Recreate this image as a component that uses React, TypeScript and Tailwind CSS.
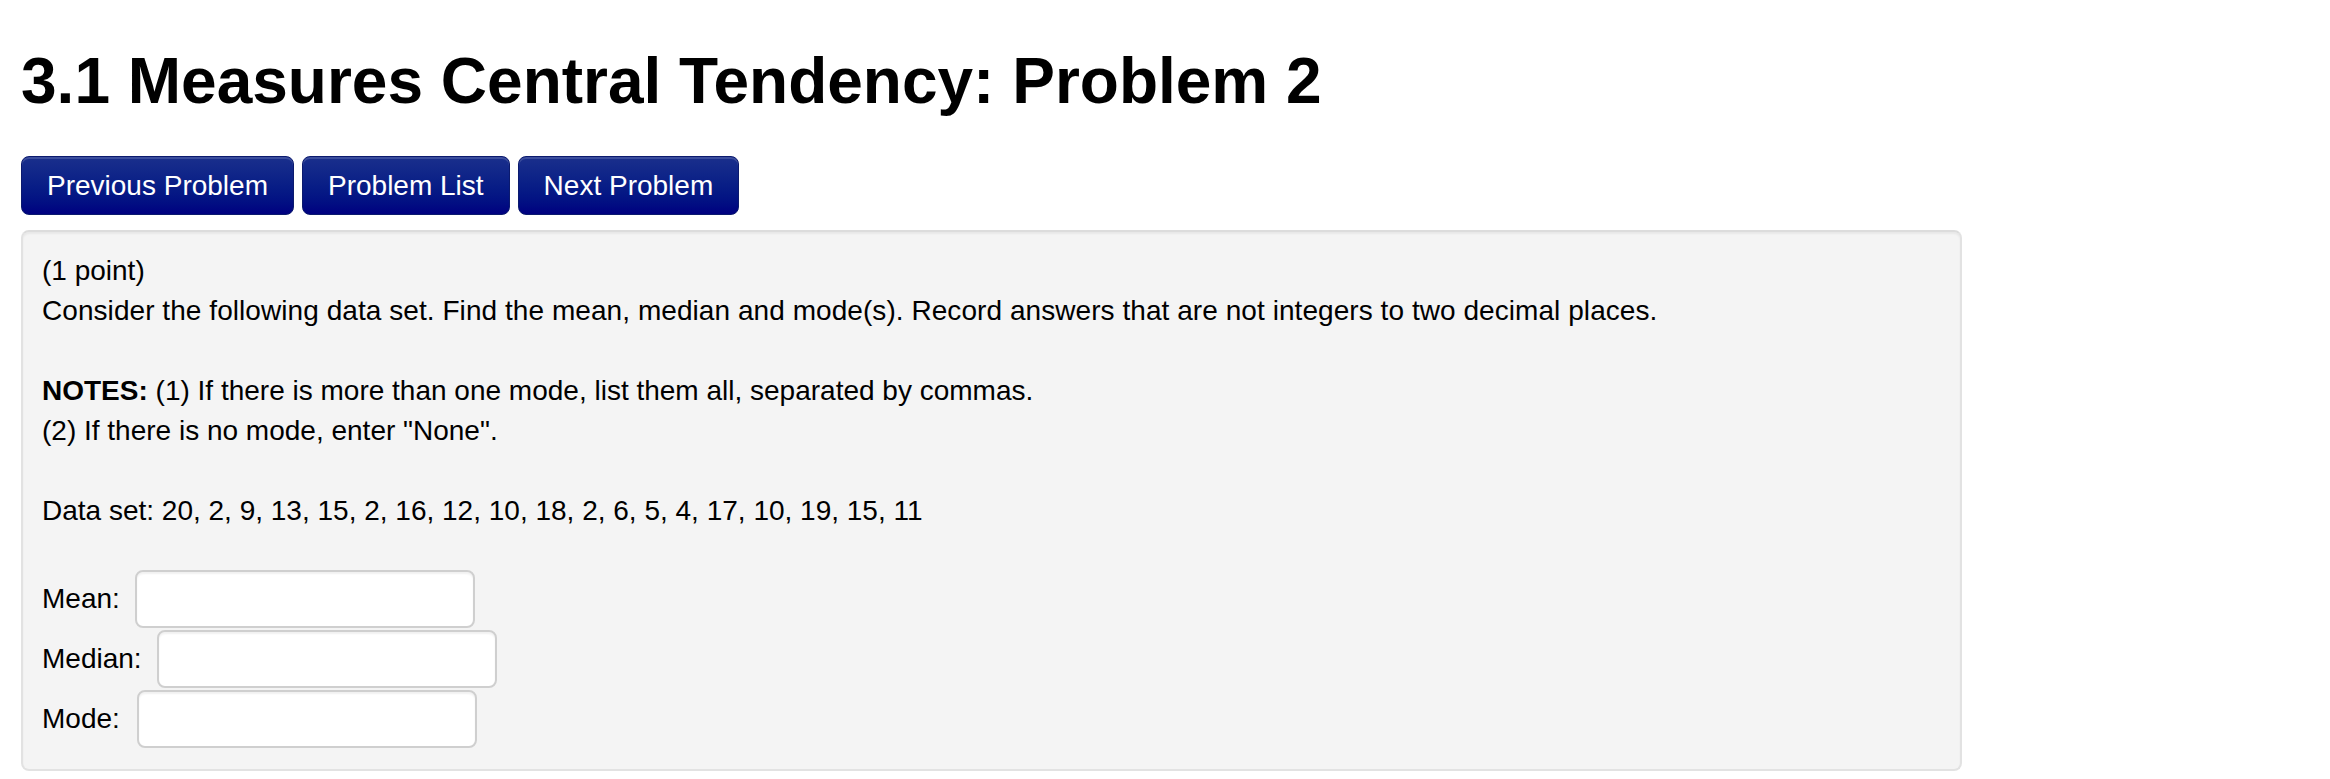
import React from 'react';

const font = { fontFamily: '"Liberation Sans", Arial, Helvetica, sans-serif' };

export default function App() {
    return (
        <div className="min-h-screen bg-white text-black" style={font}>
            <div className="pl-[21px] pt-[50px]">
                {/* Title */}
                <h2 className="text-[64px] leading-[63px] font-bold m-0">
                    3.1 Measures Central Tendency: Problem 2
                </h2>

                {/* Navigation */}
                <div className="flex gap-[8px] mt-[43px]">
                    <NavButton label="Previous Problem" />
                    <NavButton label="Problem List" />
                    <NavButton label="Next Problem" />
                </div>

                {/* Problem body */}
                <div className="mt-[15px] w-[1941px] bg-[#f4f4f4] border-2 border-[#e2e2e2] border-t-[#dcdcdc] rounded-[8px] shadow-[inset_0_2px_2px_rgba(0,0,0,0.05)] pl-[19px] pt-[19px] pb-[21px] text-[28px] leading-[40px]">
                    <div>(1 point)</div>
                    <div className="tracking-[0.06px]">
                        Consider the following data set. Find the mean, median and mode(s). Record answers that are not integers to two decimal places.
                    </div>
                    <div className="h-[40px]" />
                    <div>
                        <b>NOTES:</b> (1) If there is more than one mode, list them all, separated by commas.
                    </div>
                    <div>(2) If there is no mode, enter "None".</div>
                    <div className="h-[40px]" />
                    <div>Data set: 20, 2, 9, 13, 15, 2, 16, 12, 10, 18, 2, 6, 5, 4, 17, 10, 19, 15, 11</div>
                    <div className="h-[40px]" />

                    <div className="flex flex-col gap-[2px] -mt-[1px]">
                        <AnswerRow label="Mean:" />
                        <AnswerRow label="Median:" />
                        <AnswerRow label="Mode:" gap="ml-[17px]" />
                    </div>
                </div>
            </div>
        </div>
    );
}

function NavButton({ label }: { label: string }) {
    return (
        <button
            className="h-[59px] px-[25px] rounded-[8px] border border-[#0b1a6e] bg-gradient-to-b from-[#1a2f8c] to-[#000080] text-white text-[28px] leading-[40px] shadow-[inset_0_2px_0_rgba(255,255,255,0.15)]"
            style={font}
        >
            {label}
        </button>
    );
}

function AnswerRow({ label, gap = 'ml-[15px]' }: { label: string; gap?: string }) {
    return (
        <div className="flex items-center h-[58px]">
            <span>{label}</span>
            <input
                type="text"
                className={`${gap} w-[340px] h-[58px] bg-white border-2 border-[#cfcfcf] rounded-[8px] shadow-[inset_0_2px_2px_rgba(0,0,0,0.06)] outline-none`}
            />
        </div>
    );
}
